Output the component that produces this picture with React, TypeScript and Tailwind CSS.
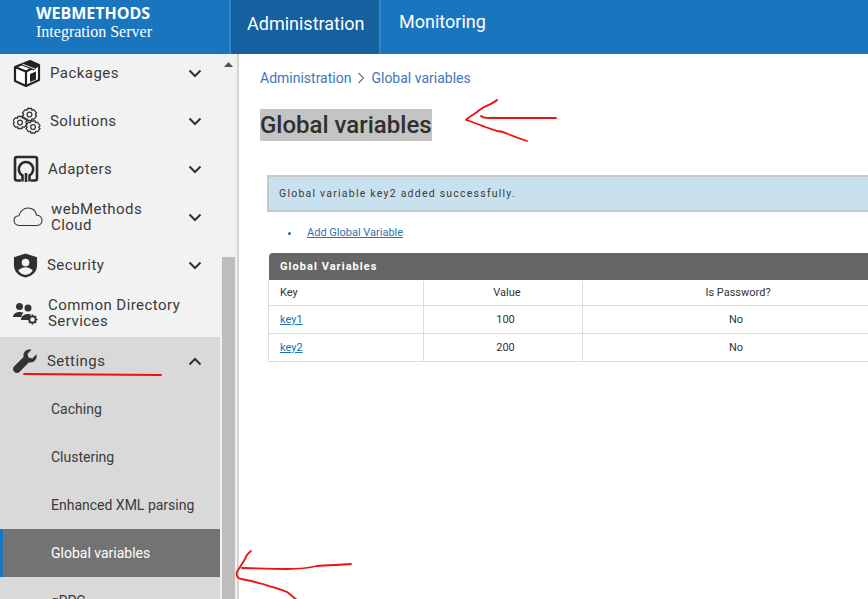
import React from "react";

const Chevron = ({ up = false }: { up?: boolean }) => (
  <svg width="14" height="9" viewBox="0 0 14 9" fill="none" className="shrink-0">
    <path d={up ? "M1.500 7.500 7 2l5.500 5.500" : "M1.500 1.500 7 7l5.500-5.500"} stroke="#333" strokeWidth="2" />
  </svg>
);

const BoxIcon = () => (
  <svg width="28" height="28" viewBox="0 0 28 28" fill="none">
    <path d="M2 8 17 2l9 4v15l-13 6-11-5Z" fill="#fff" stroke="#222" strokeWidth="2.200" strokeLinejoin="round" />
    <path d="M2 8l11 4.500L26 6M13 12.500V27" stroke="#222" strokeWidth="2.200" />
    <path d="M7.500 6 21 11.500l5-5.500-9-4Z" fill="#222" />
    <path d="M17 15l6-2.600v8L17 23Z" fill="#222" />
    <path d="M9.500 5.200 22 10" stroke="#f2f2f2" strokeWidth="1" />
  </svg>
);

const Gear = ({ x, y }: { x: number; y: number }) => (
  <g transform={`translate(${x} ${y})`} fill="none" stroke="#333">
    <path
      strokeWidth="1.300"
      d="M-2-6h4l.6 1.800 1.800-.6L7 -1.600 6-.4v.8l1 1.200L4.400 4.800 2.600 4.200 2 6h-4l-.6-1.800-1.800.6L-7 1.600-6 .4v-.8l-1-1.200L-4.400-4.800l1.800.6Z"
    />
    <circle r="2.400" strokeWidth="1.300" />
  </g>
);

const GearsIcon = () => (
  <svg width="28" height="28" viewBox="0 0 28 28">
    <Gear x={16.5} y={7.5} />
    <Gear x={7} y={15.5} />
    <Gear x={20} y={20} />
  </svg>
);

const AdapterIcon = () => (
  <svg width="26" height="28" viewBox="0 0 26 28" fill="none">
    <path d="M8 25.500H4a2 2 0 0 1-2-2V4a2 2 0 0 1 2-2h18a2 2 0 0 1 2 2v19.500a2 2 0 0 1-2 2h-4" stroke="#2b2b2b" strokeWidth="2.600" />
    <path d="M9.500 26.500V20.500a7.200 7.200 0 1 1 7 0v6" stroke="#2b2b2b" strokeWidth="2.600" />
    <path d="M13 27V18" stroke="#2b2b2b" strokeWidth="2.600" />
  </svg>
);

const CloudIcon = () => (
  <svg width="30" height="20" viewBox="0 0 30 20" fill="none">
    <path d="M7 18.500C3.500 18.500 1 16.500 1 13.500c0-2.800 2.200-4.700 5-4.800C7 4.300 11 1 15 1c4.500 0 7.600 2.800 8.500 7C26.500 8.300 29 10.500 29 13.500c0 3-2.500 5-5.500 5Z" stroke="#333" strokeWidth="1.100" />
  </svg>
);

const ShieldIcon = () => (
  <svg width="25" height="25" viewBox="0 0 26 26">
    <path d="M13 .5 1 4.500V13c0 6.500 5 11 12 12.500C20 24 25 19.500 25 13V4.500Z" fill="#2e2e2e" />
    <circle cx="13" cy="10" r="4" fill="#f2f2f2" />
    <path d="M5.500 18.500c1.500-2.600 4.500-3.800 7.500-3.800s6 1.200 7.500 3.800C18.700 21 16 22.500 13 23c-3-.5-5.700-2-7.500-4.500Z" fill="#f2f2f2" />
  </svg>
);

const PeopleIcon = () => (
  <svg width="25" height="23" viewBox="0 0 25 23">
    <circle cx="6.500" cy="4.500" r="3.500" fill="#333" />
    <circle cx="15" cy="6" r="3.500" fill="#333" />
    <path d="M0 15c0-3 3-5 7-5 1.500 0 2.700.3 3.500.8C9 12 8.500 13.500 8.500 15Z" fill="#333" />
    <path d="M8 18c0-4 3.500-6 7-6 1.200 0 2.300.2 3.300.6-1.300 1.300-2.300 3-2.300 5.400Z" fill="#333" />
    <circle cx="19.500" cy="17.500" r="3.200" fill="none" stroke="#333" strokeWidth="1.800" />
    <path d="M19.500 12.500v2M19.500 20.500v2M14.500 17.500h2M22.500 17.500h2M16 14l1.500 1.500M21.500 19.500 23 21M16 21l1.500-1.500M21.500 15.500 23 14" stroke="#333" strokeWidth="1.700" />
  </svg>
);

const WrenchIcon = () => (
  <svg width="25" height="25" viewBox="0 0 25 25">
    <path d="M16.500.5c-4 0-6.800 3.600-5.900 7.400L1 17.500c-1.300 1.300-1.300 3.600.2 5.200 1.500 1.500 3.800 1.600 5.300.2l9.500-9.600c3.800 1 7.500-2 7.700-5.800 0-.8 0-1.500-.3-2.200l-4.100 4.100-3.800-1 -1-3.700 4.100-4c-.6-.1-1.300-.2-2-.2Z" fill="#333" />
  </svg>
);

type Item = { label: React.ReactNode; icon: React.ReactNode; w: string; chevron: boolean };

const items: Item[] = [
  { label: "Packages", icon: <BoxIcon />, w: "w-[37px]", chevron: true },
  { label: "Solutions", icon: <GearsIcon />, w: "w-[37px]", chevron: true },
  { label: "Adapters", icon: <AdapterIcon />, w: "w-[35px]", chevron: true },
  { label: <>webMethods<br />Cloud</>, icon: <CloudIcon />, w: "w-[38px]", chevron: true },
  { label: "Security", icon: <ShieldIcon />, w: "w-[34px]", chevron: true },
  { label: <>Common Directory<br />Services</>, icon: <PeopleIcon />, w: "w-[35px]", chevron: false },
];

const SubItem = ({ label, active = false }: { label: string; active?: boolean }) => (
  <div
    className={
      active
        ? "h-[48px] flex items-center pl-[48px] border-l-[3px] border-[#1a75bf] bg-[#737373] text-white text-[14px]"
        : "h-[48px] flex items-center pl-[51px] text-[#3a3a3a] text-[14px]"
    }
  >
    {label}
  </div>
);

export default function App() {
  return (
    <div
      className="relative w-[868px] h-[599px] overflow-hidden bg-white flex flex-col"
      style={{ fontFamily: "Roboto, sans-serif" }}
    >
      <header className="h-[54px] shrink-0 flex bg-[#1a75bf] text-white">
        <div className="w-[229px] pl-[36px] pt-[4px]">
          <div className="text-[16px] leading-[18px] font-bold" style={{ fontFamily: '"Open Sans", sans-serif' }}>
            WEBMETHODS
          </div>
          <div className="text-[16px] leading-[20px]" style={{ fontFamily: '"Liberation Serif", serif' }}>
            Integration Server
          </div>
        </div>
        <div className="w-[152px] border-x-2 border-[#3a80d2] bg-[#15609f] flex items-start pl-[16px] pt-[10px] text-[18px]">
          Administration
        </div>
        <div className="pl-[18px] pt-[8px] text-[18px]">Monitoring</div>
      </header>

      <div className="flex-1 flex min-h-0">
        <aside className="w-[239px] shrink-0 flex overflow-hidden border-r-2 border-[#d4d4d4]">
          <nav className="w-[220px] shrink-0 bg-[#f2f2f2] overflow-hidden">
            <div className="-mt-[5px]">
              {items.map((it, i) => (
                <div key={i} className="h-[48px] flex items-center pl-[13px] pr-[18px] text-[#3a3a3a] text-[15px] tracking-[0.45px] leading-[16px]">
                  <div className={`${it.w} flex items-center shrink-0`}>{it.icon}</div>
                  <div className="flex-1 min-w-0">{it.label}</div>
                  {it.chevron && <Chevron />}
                </div>
              ))}
              <div className="bg-[#d9d9d9]">
                <div className="h-[48px] flex items-center pl-[13px] pr-[18px] text-[#3a3a3a] text-[15px] tracking-[0.45px]">
                  <div className="w-[34px] flex items-center shrink-0"><WrenchIcon /></div>
                  <div className="flex-1 min-w-0">Settings</div>
                  <Chevron up />
                </div>
                <SubItem label="Caching" />
                <SubItem label="Clustering" />
                <SubItem label="Enhanced XML parsing" />
                <SubItem label="Global variables" active />
                <div className="h-[44px] overflow-hidden">
                  <SubItem label="gRPC" />
                </div>
              </div>
            </div>
          </nav>
          <div className="flex-1 bg-[#f1f1f1] flex flex-col">
            <div className="h-[203px] shrink-0 relative">
              <svg width="9" height="5" viewBox="0 0 9 5" className="absolute left-[4px] top-[8px]">
                <path d="M4.500 0 9 5H0Z" fill="#505050" />
              </svg>
            </div>
            <div className="flex-1 ml-[2px] w-[13px] bg-[#bdbdbd]" />
          </div>
        </aside>

        <main className="flex-1 min-w-0 overflow-hidden pl-[21px] pr-0">
          <div className="pt-[14px] h-[55px] text-[14px] text-[#3f76b8] flex items-start">
            <span>Administration</span>
            <svg width="8" height="12" viewBox="0 0 8 12" className="mx-[6px] mt-[4px]" fill="none">
              <path d="M1.500 1 6.500 6l-5 5" stroke="#777" strokeWidth="1.200" />
            </svg>
            <span>Global variables</span>
          </div>
          <div className="h-[66px]">
            <h1 className="inline-block bg-[#c4c4c4] text-[#2f2f2f] text-[24px] leading-[32px] font-medium">
              Global variables
            </h1>
          </div>
          <div className="ml-[7px] w-[640px] h-[37px] border-2 border-r-0 border-[#c8c8c8] bg-[#c9e1ee] flex items-center pl-[10px] text-[10.5px] tracking-[1.23px] text-[#3a3a3a]">
            Global variable key2 added successfully.
          </div>
          <div className="h-[41px] flex items-center pl-[28px] pt-[1px] text-[11px]">
            <span className="w-[3px] h-[3px] rounded-full bg-[#1a6fa8] mr-[16px]" />
            <a className="text-[#2f70b5] underline">Add Global Variable</a>
          </div>
          <div className="ml-[8px] w-[630px]">
            <div className="ml-[1px] h-[27px] bg-[#666666] rounded-tl-[4px] flex items-center pl-[11px] pt-[2px] text-white text-[11px] font-bold tracking-[1.05px]">
              Global Variables
            </div>
            <div className="grid grid-cols-[155px_159px_316px] text-[11px] text-[#333] border-l-[1px] border-[#dcdcdc]">
              <div className="h-[25px] mt-[1px] border-r border-b border-[#dcdcdc] flex items-center pl-[11px]">Key</div>
              <div className="h-[25px] mt-[1px] border-r border-b border-[#dcdcdc] flex items-center justify-center pl-[8px]">Value</div>
              <div className="h-[25px] mt-[1px] border-b border-[#dcdcdc] flex items-center justify-center pr-[6px]">Is Password?</div>
              <div className="h-[28px] pt-[2px] border-r border-b border-[#dcdcdc] flex items-center pl-[11px] text-[#1a6fb5] underline">key1</div>
              <div className="h-[28px] pt-[2px] border-r border-b border-[#dcdcdc] flex items-center justify-center pl-[5px]">100</div>
              <div className="h-[28px] pt-[2px] border-b border-[#dcdcdc] flex items-center justify-center pr-[10px]">No</div>
              <div className="h-[28px] pt-[2px] border-r border-b border-[#dcdcdc] flex items-center pl-[11px] text-[#1a6fb5] underline">key2</div>
              <div className="h-[28px] pt-[2px] border-r border-b border-[#dcdcdc] flex items-center justify-center pl-[5px]">200</div>
              <div className="h-[28px] pt-[2px] border-b border-[#dcdcdc] flex items-center justify-center pr-[10px]">No</div>
            </div>
          </div>
        </main>
      </div>

      {/* hand-drawn annotations */}
      <svg className="absolute inset-0 pointer-events-none" width="868" height="599" viewBox="0 0 868 599" fill="none" stroke="#ee1111" strokeWidth="1.800" strokeLinecap="round" strokeLinejoin="round">
        <path d="M497 100c-3 3-9 5-13 7-3 2-5 3-7 5-4 3-8 5-11 8 4 1 9 3 14 5 5 2 11 4 17 6 4 0 7 1 11 3 5 2 13 5 19 7" />
        <path d="M481 116c2 2 5 2 9 2h66" />
        <path d="M24 374l137 1" />
        <path d="M251 551c-3 2-5 5-6 8-2 4-6 9-8 13-1 3 0 6 4 7 7 1 14 3 22 5 8 3 15 4 24 8 3 2 6 5 10 8" />
        <path d="M242 568c10 0 25 1 45 1 15 0 22-1 30-3 11-1 22-1 34-2" />
      </svg>
    </div>
  );
}
